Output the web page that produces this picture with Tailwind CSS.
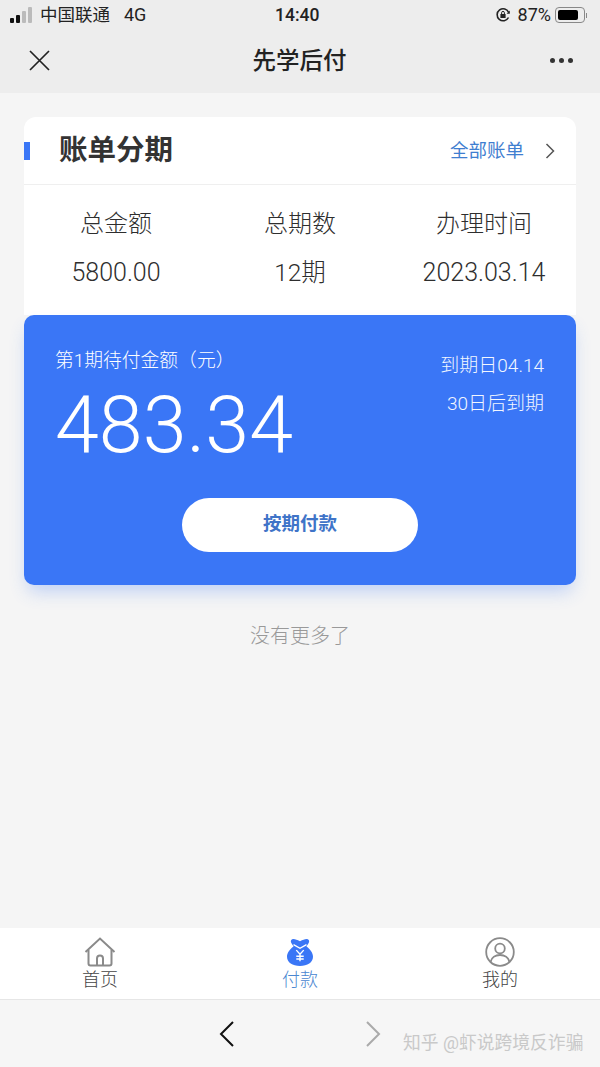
<!DOCTYPE html>
<html lang="zh-CN">
<head>
    <meta charset="UTF-8">
    <title>先学后付</title>
    <script src="https://cdn.jsdelivr.net/npm/@tailwindcss/browser@4"></script>
</head>
<body class="w-[600px] h-[1067px] overflow-hidden bg-[#f5f5f5] font-['Roboto','Noto_Sans_CJK_SC',sans-serif] relative">
    <!-- Top bars -->
    <header class="h-[93px] bg-[#ededed] text-[#1a1a1a]">
        <div class="h-[30px] flex items-center justify-between relative text-[#222]">
            <div class="flex items-center pl-[10px]">
                <div class="flex items-end gap-[2px] h-[16px] mr-[8px] -mt-[1px]">
                    <span class="w-[4px] h-[5px] rounded-[1px] bg-[#111]"></span>
                    <span class="w-[4px] h-[8px] rounded-[1px] bg-[#111]"></span>
                    <span class="w-[4px] h-[12px] rounded-[1px] bg-[#bbb]"></span>
                    <span class="w-[4px] h-[16px] rounded-[1px] bg-[#bbb]"></span>
                </div>
                <span class="text-[17.500px] leading-[20px]">中国联通</span>
                <span class="text-[18px] leading-[20px] ml-[14px]">4G</span>
            </div>
            <span class="absolute left-[275px] top-[4px] text-[17.500px] leading-[22px] font-medium">14:40</span>
            <div class="flex items-center pr-[13px]">
                <svg class="w-[16px] h-[16px] mr-[7px]" viewBox="0 0 16 16" fill="none" stroke="#222" stroke-width="1.6">
                    <path d="M13.5 10.5A6 6 0 1 1 13.7 5.5"/>
                    <path d="M14.8 3.6v3.2h-3.2z" fill="#222" stroke="none"/>
                    <rect x="5.4" y="7" width="5.2" height="4" fill="#222" stroke="none"/>
                    <path d="M6.6 7V5.800a1.4 1.4 0 0 1 2.8 0V7" stroke-width="1"/>
                </svg>
                <span class="text-[18px] leading-[20px]">87%</span>
                <div class="ml-[4px] w-[30px] h-[16px] rounded-[4px] border border-[#888] p-[2px]">
                    <div class="w-[84%] h-full rounded-[2px] bg-black"></div>
                </div>
                <span class="w-[1px] h-[5px] bg-[#888] ml-[1px]"></span>
            </div>
        </div>
        <div class="h-[63px] flex items-center justify-between relative">
            <svg class="ml-[29px] w-[21px] h-[21px] -mt-[3px]" viewBox="0 0 21 21" fill="none" stroke="#222" stroke-width="1.7">
                <path d="M1 1l19 19M20 1L1 20"/>
            </svg>
            <h1 class="absolute left-0 right-0 text-center text-[23.500px] leading-[30px] font-medium text-[#222] -mt-[1px] -ml-[1px]">先学后付</h1>
            <div class="flex gap-[4px] mr-[27px] -mt-[2px]">
                <span class="w-[5px] h-[5px] rounded-full bg-[#333]"></span>
                <span class="w-[5px] h-[5px] rounded-full bg-[#333]"></span>
                <span class="w-[5px] h-[5px] rounded-full bg-[#333]"></span>
            </div>
        </div>
    </header>

    <main class="px-[24px] pt-[24px]">
        <div class="bg-white rounded-t-[12px]">
            <div class="h-[68px] flex items-center justify-between border-b border-[#efefef] relative">
                <div class="flex items-center">
                    <span class="w-[6px] h-[18px] bg-[#3a76f6]"></span>
                    <h2 class="ml-[29px] text-[28.500px] leading-[36px] font-bold text-[#333] mt-[1px]">账单分期</h2>
                </div>
                <div class="flex items-center pr-[21px]">
                    <span class="text-[18.500px] leading-[26px] text-[#3f7ed0]">全部账单</span>
                    <svg class="ml-[21px] w-[10px] h-[16px]" viewBox="0 0 10 16" fill="none" stroke="#555" stroke-width="1.5">
                        <path d="M1.5 1l7 7-7 7"/>
                    </svg>
                </div>
            </div>
            <div class="grid grid-cols-3 h-[130px] text-center text-[#2e2e2e] pt-[21px] font-light">
                <div>
                    <div class="text-[24px] leading-[36px]">总金额</div>
                    <div class="text-[25px] leading-[32px] mt-[15px]">5800.00</div>
                </div>
                <div>
                    <div class="text-[24px] leading-[36px]">总期数</div>
                    <div class="text-[24.500px] leading-[32px] mt-[15px]">12期</div>
                </div>
                <div>
                    <div class="text-[24px] leading-[36px]">办理时间</div>
                    <div class="text-[25px] leading-[32px] mt-[15px]">2023.03.14</div>
                </div>
            </div>
        </div>

        <div class="h-[270px] bg-[#3a76f6] rounded-[10px] shadow-[0_10px_18px_-4px_rgba(58,118,246,0.3)] relative text-white pt-[33px] px-[32px]">
            <div class="flex justify-between">
                <div>
                    <div class="text-[18.800px] leading-[26px] font-light -ml-[1px]">第1期待付金额（元）</div>
                    <div class="text-[79px] leading-[84px] mt-[9px] font-[350] -ml-[1px]">483.34</div>
                </div>
                <div class="text-right text-[19px] leading-[26px] pt-[5px] text-[#f2f6ff] font-light">
                    <div>到期日04.14</div>
                    <div class="mt-[12px]">30日后到期</div>
                </div>
            </div>
            <div class="mt-[31px] mx-auto w-[236px] h-[54px] rounded-[27px] bg-white flex items-center justify-center text-[18.500px] font-bold text-[#3f74c8]">按期付款</div>
        </div>

        <p class="mt-[37px] text-center text-[20px] leading-[28px] text-[#999] font-light">没有更多了</p>
    </main>

    <!-- Tab bar -->
    <nav class="absolute left-0 right-0 top-[928px] h-[72px] bg-white border-b border-[#e6e6e6] grid grid-cols-3 text-center text-[18px] leading-[22px] text-[#444] font-light">
        <div class="flex flex-col items-center pt-[9px]">
            <svg class="w-[32px] h-[30px]" viewBox="0 0 32 30" fill="none" stroke="#8a8a8a" stroke-width="2">
                <path d="M1.500 15L16 1.500 30.500 15"/>
                <path d="M4.500 13v13.500a2 2 0 0 0 2 2h19a2 2 0 0 0 2-2V13"/>
                <path d="M13 28.500v-7a3 3 0 0 1 6 0v7"/>
            </svg>
            <span class="mt-[2px]">首页</span>
        </div>
        <div class="flex flex-col items-center pt-[9px] text-[#4a86d0]">
            <svg class="w-[26px] h-[30px]" viewBox="0 0 28 30" fill="none">
                <path d="M7 1c2 0 4 1 7 2.500C17 2 19 1 21 1c2.500 0 3.500 2 2.500 4L21 9c4 3 7 7 7 11 0 6-6 10-14 10S0 26 0 20c0-4 3-8 7-11L4.500 5C3.500 3 4.500 1 7 1z" fill="#3a76f6"/>
                <path d="M7 7l7 4 7-4" stroke="#fff" stroke-width="1.500"/>
                <path d="M10 13l4 4.500 4-4.500M14 17.500V25M10 19.500h8M10 22.500h8" stroke="#fff" stroke-width="1.500"/>
            </svg>
            <span class="mt-[2px]">付款</span>
        </div>
        <div class="flex flex-col items-center pt-[9px]">
            <svg class="w-[30px] h-[30px]" viewBox="0 0 30 30" fill="none" stroke="#8a8a8a" stroke-width="1.800">
                <circle cx="15" cy="15" r="13.800"/>
                <circle cx="15" cy="11.500" r="4.800"/>
                <path d="M5.500 25c1-4.500 5-7 9.500-7s8.500 2.500 9.500 7"/>
            </svg>
            <span class="mt-[2px]">我的</span>
        </div>
    </nav>

    <!-- Browser nav -->
    <div class="absolute left-0 right-0 top-[1000px] h-[67px] bg-[#f6f6f6]">
        <svg class="absolute left-[219px] top-[21px] w-[16px] h-[26px]" viewBox="0 0 16 26" fill="none" stroke="#111" stroke-width="2">
            <path d="M14 1L2 13l12 12"/>
        </svg>
        <svg class="absolute left-[365px] top-[21px] w-[16px] h-[26px]" viewBox="0 0 16 26" fill="none" stroke="#aaa" stroke-width="2">
            <path d="M2 1l12 12L2 25"/>
        </svg>
        <!-- watermark -->
        <div class="absolute left-[403px] top-[31px] text-[17.800px] leading-[24px] text-[#c9c9c9] whitespace-nowrap">知乎 @虾说跨境反诈骗</div>
    </div>
</body>
</html>
